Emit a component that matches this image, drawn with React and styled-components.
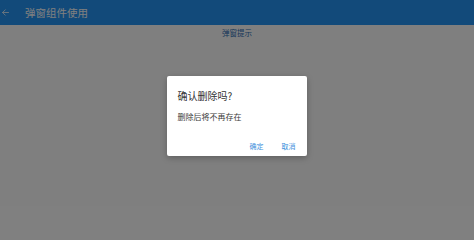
import React from "react";
import styled, { createGlobalStyle } from "styled-components";

const Global = createGlobalStyle`
  html, body { margin: 0; padding: 0; }
  body { font-family: "Noto Sans CJK SC", "Noto Sans", sans-serif; background: #808080; }
`;

const Page = styled.div`
  position: relative;
  width: 474px;
  height: 206px;
  overflow: hidden;
  background: #ffffff;
`;

const Header = styled.header`
  height: 25px;
  background: #2595f5;
  display: flex;
  align-items: center;
  color: #ffffff;
`;

const Back = styled.div`
  width: 25px;
  display: flex;
  align-items: center;
  padding-left: 2px;
  box-sizing: border-box;
`;

const Title = styled.div`
  font-size: 10.5px;
  line-height: 14px;
`;

const Content = styled.main`
  display: flex;
  justify-content: center;
  padding-top: 3px;
`;

const LinkText = styled.span`
  font-size: 7.5px;
  line-height: 10px;
  color: #2f6fb5;
`;

const Overlay = styled.div`
  position: absolute;
  inset: 0;
  background: rgba(0, 0, 0, 0.5);
  display: flex;
  align-items: center;
  justify-content: center;
  padding-top: 25px;
  box-sizing: border-box;
`;

const Dialog = styled.div`
  width: 140px;
  height: 80px;
  box-sizing: border-box;
  background: #ffffff;
  border-radius: 2px;
  box-shadow: 0 2px 6px rgba(0, 0, 0, 0.25);
  padding: 13px 7px 0 11px;
  display: flex;
  flex-direction: column;
  margin-left: -1px;
`;

const DialogTitle = styled.div`
  font-size: 10px;
  line-height: 14px;
  color: #333333;
`;

const DialogBody = styled.div`
  margin-top: 9px;
  font-size: 8px;
  line-height: 10px;
  color: #3a3a3a;
`;

const Actions = styled.div`
  margin-top: 14px;
  display: flex;
  justify-content: flex-end;
  gap: 10px;
`;

const ActionButton = styled.button`
  height: 20px;
  padding: 0 4px;
  border: none;
  background: transparent;
  font-family: inherit;
  font-size: 7px;
  line-height: 10px;
  color: #3d8fdc;
  cursor: pointer;
`;

export default function App() {
  return (
    <>
      <Global />
      <Page>
        <Header>
          <Back>
            <svg width="7" height="7" viewBox="0 0 24 24" fill="none" stroke="#ffffff" strokeWidth="2.6" strokeLinecap="square">
              <path d="M22 12H3" />
              <path d="M11 3l-9 9 9 9" />
            </svg>
          </Back>
          <Title>弹窗组件使用</Title>
        </Header>
        <Content>
          <LinkText>弹窗提示</LinkText>
        </Content>
        <Overlay>
          <Dialog>
            <DialogTitle>确认删除吗?</DialogTitle>
            <DialogBody>删除后将不再存在</DialogBody>
            <Actions>
              <ActionButton>确定</ActionButton>
              <ActionButton>取消</ActionButton>
            </Actions>
          </Dialog>
        </Overlay>
      </Page>
    </>
  );
}
